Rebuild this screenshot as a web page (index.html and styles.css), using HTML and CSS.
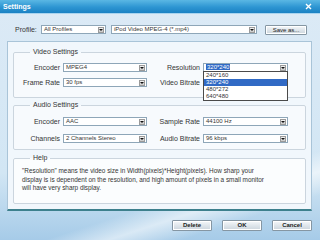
FILE: index.html
```html
<!DOCTYPE html>
<html lang="en">
<head>
    <meta charset="UTF-8">
    <title>Settings</title>
    <link rel="stylesheet" href="styles.css">
</head>
<body>
    <div class="window">
        <div class="titlebar">
            <span class="title">Settings</span>
            <svg class="close" width="7" height="7" viewBox="0 0 7 7">
                <path d="M1 1 L6 6 M6 1 L1 6" stroke="#fff" stroke-width="1.4" />
            </svg>
        </div>

        <div class="profile-row">
            <span class="profile-label">Profile:</span>
            <div class="select profile-select"><span class="value">All Profiles</span><span class="arrow"></span></div>
            <div class="select format-select"><span class="value">iPod Video MPEG-4 (*.mp4)</span><span class="arrow"></span></div>
            <button class="btn save-btn">Save as...</button>
        </div>

        <div class="panel">
            <fieldset class="group video-group">
                <legend>Video Settings</legend>
                <div class="fields">
                    <label>Encoder</label>
                    <div class="select"><span class="value">MPEG4</span><span class="arrow"></span></div>
                    <label>Resolution</label>
                    <div class="select open">
                        <span class="value"><span class="picked">320*240</span></span><span class="arrow"></span>
                        <ul class="dropdown">
                            <li>240*160</li>
                            <li class="active">320*240</li>
                            <li>480*272</li>
                            <li>640*480</li>
                        </ul>
                    </div>
                    <label>Frame Rate</label>
                    <div class="select"><span class="value">30 fps</span><span class="arrow"></span></div>
                    <label>Video Bitrate</label>
                    <div class="select"><span class="value"></span><span class="arrow"></span></div>
                </div>
            </fieldset>

            <fieldset class="group audio-group">
                <legend>Audio Settings</legend>
                <div class="fields">
                    <label>Encoder</label>
                    <div class="select"><span class="value">AAC</span><span class="arrow"></span></div>
                    <label>Sample Rate</label>
                    <div class="select"><span class="value">44100 Hz</span><span class="arrow"></span></div>
                    <label>Channels</label>
                    <div class="select"><span class="value">2 Channels Stereo</span><span class="arrow"></span></div>
                    <label>Audio Bitrate</label>
                    <div class="select"><span class="value">96 kbps</span><span class="arrow"></span></div>
                </div>
            </fieldset>

            <fieldset class="group help-group">
                <legend>Help</legend>
                <p class="help-text">"Resolution" means the video size in Width(pixels)*Height(pixels). How sharp your<br>display is is dependent on the resolution, and high amount of pixels in a small monitor<br>will have very sharp display.</p>
            </fieldset>
        </div>

        <div class="actions">
            <button class="btn action-btn">Delete</button>
            <button class="btn action-btn">OK</button>
            <button class="btn action-btn">Cancel</button>
        </div>
    </div>
</body>
</html>
```

FILE: styles.css
```css
* {
    box-sizing: border-box;
}
body {
    margin: 0;
}
.window {
    width: 320px;
    height: 240px;
    display: flex;
    flex-direction: column;
    overflow: hidden;
    font-family: "Liberation Sans", Arial, sans-serif;
    color: #353535;
    background:
        linear-gradient(162deg, transparent 0 74%, rgba(255, 255, 255, 0.55) 80%, transparent 87%),
        linear-gradient(#dceaf6, #d2e6f4 72%, #a6cbe8);
}
.titlebar {
    flex: none;
    height: 14px;
    display: flex;
    align-items: center;
    justify-content: space-between;
    padding: 0 8px 0 3px;
    background: linear-gradient(#5ab7e4, #2d95d2 55%, #1c82c3);
    border-bottom: 1px solid #a9d4ef;
    color: #fff;
    font-size: 7px;
    font-weight: bold;
}
.close {
    display: block;
}

.profile-row {
    flex: none;
    display: flex;
    align-items: center;
    height: 11px;
    margin-top: 10px;
    padding-left: 15px;
    font-size: 7px;
}
.profile-label {
    width: 26px;
}
.profile-select {
    width: 65px;
}
.format-select {
    width: 146px;
    margin-left: 5px;
}
.save-btn {
    width: 42px;
    height: 10px;
    margin-left: 8px;
    font-weight: normal;
}

/* combo boxes */
.select {
    position: relative;
    height: 9px;
    display: flex;
    align-items: center;
    background: #fff;
    border: 1px solid #8ea6b8;
    font-size: 6px;
    line-height: 7px;
}
.select .value {
    flex: 1;
    padding-left: 2px;
    white-space: nowrap;
    overflow: hidden;
}
.select .arrow {
    flex: none;
    width: 6px;
    height: 6px;
    margin-right: 1px;
    display: flex;
    align-items: center;
    justify-content: center;
    background: linear-gradient(#f4f4f4, #c9c9c9);
    border: 1px solid #9a9a9a;
}
.select .arrow::after {
    content: "";
    border-top: 2px solid #111;
    border-left: 2px solid transparent;
    border-right: 2px solid transparent;
}
.picked {
    background: #316ac5;
    color: #fff;
    padding: 0 1px;
}
.dropdown {
    position: absolute;
    top: 100%;
    left: -1px;
    right: -1px;
    z-index: 2;
    margin: 0;
    padding: 0;
    list-style: none;
    background: #fff;
    border: 1px solid #4a4a4a;
}
.dropdown li {
    height: 7px;
    line-height: 7px;
    padding-left: 2px;
}
.dropdown li.active {
    background: #316ac5;
    color: #fff;
}

/* main panel */
.panel {
    flex: none;
    margin: 6px 8px 0 7px;
    padding: 6px 5px 5px;
    background: #f1f7fc;
    border: 1px solid #a9c4d8;
    border-bottom: 2px solid #3d808d;
}
.group {
    margin: 0;
    padding: 0;
    min-width: 0;
    border: 1px solid #cbd5de;
    border-radius: 2px;
    background: #f7fafd;
}
.group legend {
    margin-left: 16px;
    padding: 0 3px;
    font-size: 7px;
    line-height: 8px;
}
.fields {
    display: grid;
    grid-template-columns: 46px 84px 50px 85px;
    column-gap: 3px;
    align-items: center;
    font-size: 7px;
}
.fields label {
    text-align: right;
    white-space: nowrap;
}
.video-group .fields {
    row-gap: 6px;
    padding: 7px 0 10px;
}
.audio-group {
    margin-top: 3px;
}
.audio-group .fields {
    row-gap: 8px;
    padding: 8px 0 6px;
}
.help-group {
    margin-top: 4px;
    background: #fbfdfe;
}
.help-text {
    margin: 0;
    padding: 5px 8px 10px;
    font-size: 6.4px;
    line-height: 8.5px;
    white-space: nowrap;
}

/* bottom buttons */
.btn {
    padding: 0;
    font-family: inherit;
    font-size: 6px;
    color: #222;
    background: linear-gradient(#f6f8fa, #dde4ea 55%, #ccd5dc);
    border: 1px solid #8596a3;
    border-radius: 1px;
    box-shadow: inset 0 0 0 1px #fff;
}
.actions {
    flex: none;
    display: flex;
    justify-content: flex-end;
    gap: 10px;
    margin: 9px 8px 0 0;
}
.action-btn {
    width: 40px;
    height: 11px;
    font-weight: bold;
}
```
